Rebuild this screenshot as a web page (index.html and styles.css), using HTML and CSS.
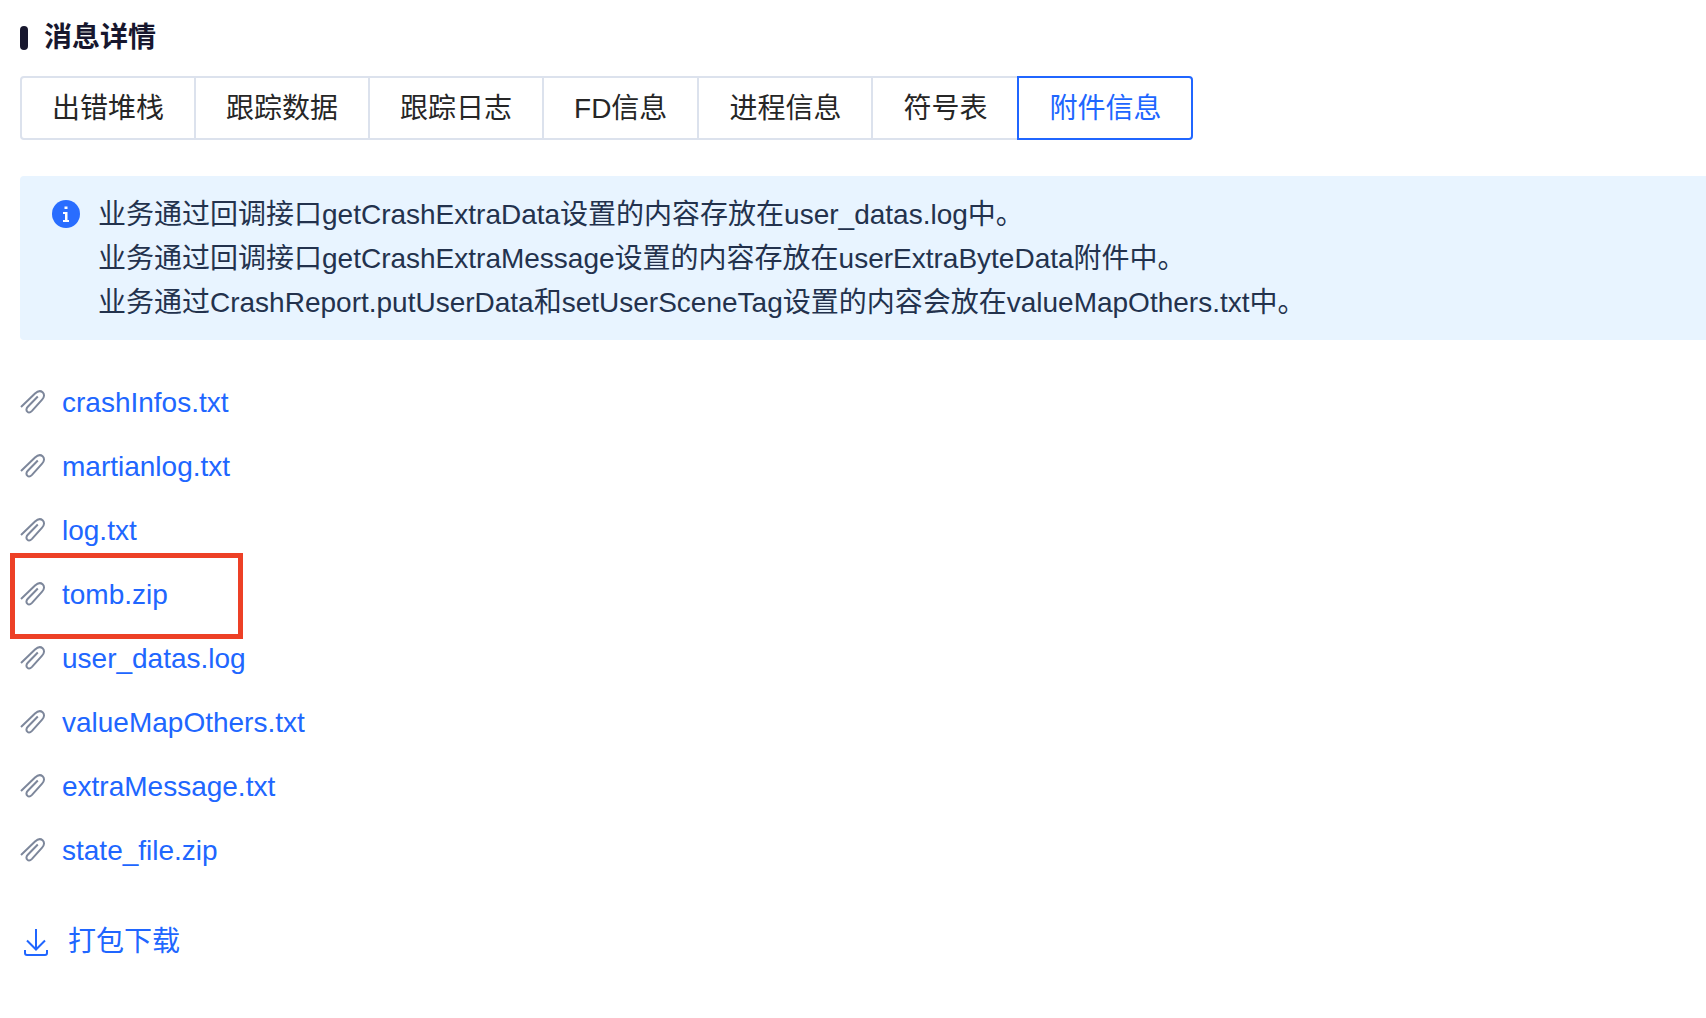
FILE: index.html
```html
<!DOCTYPE html>
<html lang="zh-CN">
<head>
<meta charset="utf-8">
<title>消息详情</title>
<link rel="stylesheet" href="styles.css">
</head>
<body>
<svg class="sprite" aria-hidden="true">
  <symbol id="clip" viewBox="0 0 28 28">
    <path d="M1 18 15 4.500c2.700-2.500 5.700-2.900 7.600-1.200 2.100 1.900 1.800 4.900-.500 7.300L12 21.900c-1.600 1.600-3.500 1.900-4.700.700-1.300-1.200-1.100-3.100.500-4.800L17.800 7.500"/>
  </symbol>
</svg>
<main class="page">
  <h1 class="title">消息详情</h1>
  <nav class="tabs">
    <button class="tab" type="button">出错堆栈</button>
    <button class="tab" type="button">跟踪数据</button>
    <button class="tab" type="button">跟踪日志</button>
    <button class="tab" type="button">FD信息</button>
    <button class="tab" type="button">进程信息</button>
    <button class="tab" type="button">符号表</button>
    <button class="tab tab-active" type="button">附件信息</button>
  </nav>
  <section class="notice">
    <svg class="notice-icon" viewBox="0 0 28 28" aria-hidden="true">
      <circle cx="14" cy="14" r="14" fill="#296dff"/>
      <path d="M12.500 6.500h3v2.500h-3zM11 12h4.500v8H17v2h-6v-2h2v-6h-2z" fill="#fff"/>
    </svg>
    <div class="notice-text">
      <p>业务通过回调接口getCrashExtraData设置的内容存放在user_datas.log中。</p>
      <p>业务通过回调接口getCrashExtraMessage设置的内容存放在userExtraByteData附件中。</p>
      <p>业务通过CrashReport.putUserData和setUserSceneTag设置的内容会放在valueMapOthers.txt中。</p>
    </div>
  </section>
  <ul class="files">
    <li class="file"><svg class="clip" aria-hidden="true"><use href="#clip"/></svg><a href="#">crashInfos.txt</a></li>
    <li class="file"><svg class="clip" aria-hidden="true"><use href="#clip"/></svg><a href="#">martianlog.txt</a></li>
    <li class="file"><svg class="clip" aria-hidden="true"><use href="#clip"/></svg><a href="#">log.txt</a></li>
    <li class="file file-marked"><svg class="clip" aria-hidden="true"><use href="#clip"/></svg><a href="#">tomb.zip</a></li>
    <li class="file"><svg class="clip" aria-hidden="true"><use href="#clip"/></svg><a href="#">user_datas.log</a></li>
    <li class="file"><svg class="clip" aria-hidden="true"><use href="#clip"/></svg><a href="#">valueMapOthers.txt</a></li>
    <li class="file"><svg class="clip" aria-hidden="true"><use href="#clip"/></svg><a href="#">extraMessage.txt</a></li>
    <li class="file"><svg class="clip" aria-hidden="true"><use href="#clip"/></svg><a href="#">state_file.zip</a></li>
  </ul>
  <a class="download" href="#">
    <svg class="download-icon" viewBox="0 0 28 28" aria-hidden="true">
      <path d="M14 1v20M5 12.500l9 9 9-9M3 22v3q0 2 2 2h18q2 0 2-2v-3"/>
    </svg>
    打包下载
  </a>
</main>
</body>
</html>
```

FILE: styles.css
```css
*,
*::before,
*::after {
  box-sizing: border-box;
}

body {
  margin: 0;
  background: #fff;
  color: #262626;
  font: 28px/44px "Liberation Sans", "Noto Sans CJK SC", sans-serif;
}

.sprite {
  display: none;
}

.page {
  padding: 16px 0 16px 20px;
}

.title {
  display: flex;
  align-items: center;
  gap: 16px;
  margin: 0 0 16px;
  color: #17172e;
  font-size: 28px;
  line-height: 44px;
  font-weight: 700;
}

.title::before {
  content: "";
  width: 8px;
  height: 24px;
  border-radius: 4px;
  background: #17172e;
}

.tabs {
  display: flex;
  margin-bottom: 36px;
}

.tab {
  height: 64px;
  padding: 2px 30px 0;
  border: 2px solid #dce2ed;
  background: #fff;
  color: inherit;
  font: inherit;
  white-space: nowrap;
}

.tab + .tab {
  margin-left: -2px;
}

.tab:first-child {
  border-radius: 4px 0 0 4px;
}

.tab:last-child {
  border-radius: 0 4px 4px 0;
}

.tab-active {
  border-color: #2066ff;
  color: #2066ff;
}

.notice {
  display: flex;
  gap: 18px;
  padding: 17px 0 15px 32px;
  border-radius: 4px 0 0 4px;
  background: #e8f4ff;
  color: #23324d;
}

.notice-icon {
  flex: none;
  width: 28px;
  height: 28px;
  margin-top: 7px;
}

.notice-text p {
  margin: 0;
}

.files {
  margin: 31px 0 37px;
  padding: 0;
  list-style: none;
}

.file {
  position: relative;
  display: flex;
  align-items: center;
  gap: 14px;
  height: 64px;
}

.file a,
.download {
  color: #2066ff;
  text-decoration: none;
}

.clip {
  width: 28px;
  height: 28px;
  fill: none;
  stroke: #7d879b;
  stroke-width: 2;
}

.file-marked::after {
  content: "";
  position: absolute;
  top: -10px;
  left: -10px;
  width: 233px;
  height: 86px;
  border: 5px solid #ed4026;
}

.download {
  display: inline-flex;
  align-items: center;
  gap: 18px;
  padding-left: 2px;
}

.download-icon {
  width: 28px;
  height: 28px;
  fill: none;
  stroke: currentColor;
  stroke-width: 2;
}
```
